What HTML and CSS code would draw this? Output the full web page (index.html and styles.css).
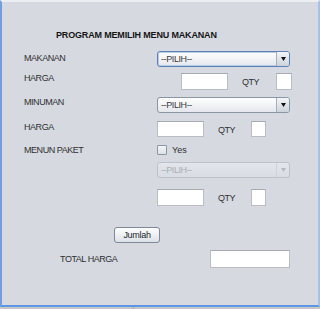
FILE: index.html
```html
<!DOCTYPE html>
<html lang="id">

<head>
  <meta charset="UTF-8">
  <meta name="viewport" content="width=device-width, initial-scale=1.0">
  <title>Program Memilih Menu Makanan</title>
  <link rel="stylesheet" href="styles.css">
</head>

<body>
  <div class="window">
    <div class="panel">
      <div class="row title-row">
        <h1 class="title">PROGRAM MEMILIH MENU MAKANAN</h1>
      </div>

      <div class="row row-makanan">
        <label class="label label-mid">MAKANAN</label>
        <div class="combo focused">
          <span class="combo-text">--PILIH--</span>
          <span class="combo-arrow"><svg width="5" height="4" viewBox="0 0 5 4"><path d="M0 0H5L2.5 4Z" fill="#111"/></svg></span>
        </div>
      </div>

      <div class="row row-harga1">
        <label class="label label-top">HARGA</label>
        <input class="field field-price shift" type="text">
        <span class="qty">QTY</span>
        <input class="field field-qty" type="text">
      </div>

      <div class="row row-minuman">
        <label class="label label-top">MINUMAN</label>
        <div class="combo">
          <span class="combo-text">--PILIH--</span>
          <span class="combo-arrow"><svg width="5" height="4" viewBox="0 0 5 4"><path d="M0 0H5L2.5 4Z" fill="#111"/></svg></span>
        </div>
      </div>

      <div class="row row-harga2">
        <label class="label label-top">HARGA</label>
        <input class="field field-price" type="text">
        <span class="qty">QTY</span>
        <input class="field field-qty small" type="text">
      </div>

      <div class="row row-paket">
        <label class="label label-mid">MENUN PAKET</label>
        <span class="check"></span>
        <span class="check-text">Yes</span>
      </div>

      <div class="row row-disabled">
        <div class="combo disabled">
          <span class="combo-text">--PILIH--</span>
          <span class="combo-arrow"><svg width="5" height="4" viewBox="0 0 5 4"><path d="M0 0H5L2.5 4Z" fill="#b4b9c0"/></svg></span>
        </div>
      </div>

      <div class="row row-harga3">
        <input class="field field-price" type="text">
        <span class="qty">QTY</span>
        <input class="field field-qty small" type="text">
      </div>

      <div class="row row-button">
        <button class="btn">Jumlah</button>
      </div>

      <div class="row row-total">
        <label class="label total-label">TOTAL HARGA</label>
        <input class="field field-total" type="text">
      </div>
    </div>
    <div class="status">
      <span class="status-left"></span>
    </div>
  </div>
</body>

</html>
```

FILE: styles.css
```css
/* global */
body {
  margin: 0;
  font-family: "Liberation Sans", Arial, sans-serif;
  background-color: #c9cacd;
}

/* window frame */
.window {
  width: 320px;
  height: 309px;
  overflow: hidden;
}

.panel {
  box-sizing: border-box;
  height: 307px;
  background-color: #d6d9df;
  border-top: 2px solid #eceef2;
  border-left: 2px solid #6d9ee6;
  border-right: 2px solid #a9bfe4;
  border-bottom: 2px solid #5f96e2;
  display: flex;
  flex-direction: column;
}

.status {
  height: 2px;
  background-color: #c6c7c9;
  display: flex;
}

.status-left {
  width: 133px;
  border-right: 1px solid #a9aaad;
}

/* rows */
.row {
  display: flex;
  flex-shrink: 0;
}

.title-row {
  margin-top: 27px;
  height: 12px;
}

.title {
  margin: 0 0 0 54px;
  font-size: 9px;
  line-height: 12px;
  font-weight: bold;
  letter-spacing: -0.17px;
  color: #151515;
}

.row-makanan {
  margin-top: 10px;
  height: 16px;
}

.row-harga1 {
  margin-top: 6px;
  height: 17px;
}

.row-minuman {
  margin-top: 7px;
  height: 16px;
}

.row-harga2 {
  margin-top: 8px;
  height: 16px;
}

.row-paket {
  margin-top: 8px;
  height: 10px;
}

.row-disabled {
  margin-top: 7px;
  height: 16px;
  padding-left: 155px;
}

.row-harga3 {
  margin-top: 11px;
  height: 17px;
  padding-left: 155px;
}

.row-button {
  margin-top: 21px;
  height: 16px;
  padding-left: 112px;
}

.row-total {
  margin-top: 7px;
  height: 18px;
  align-items: center;
}

/* labels */
.label {
  box-sizing: border-box;
  width: 155px;
  padding-left: 22px;
  font-size: 9px;
  letter-spacing: -0.45px;
  color: #2f3033;
  white-space: nowrap;
}

.label-mid {
  line-height: 15px;
}

.label-top {
  line-height: 10px;
}

.row-harga2 .label-top {
  line-height: 12px;
}

.row-paket .label-mid {
  line-height: 10px;
}

.total-label {
  width: 208px;
  padding-left: 58px;
  line-height: 14px;
}

.qty {
  align-self: center;
  margin: 1px 16px 0 14px;
  font-size: 9px;
  letter-spacing: -0.45px;
  color: #2f3033;
}

.row-harga1 .qty {
  margin-right: 17px;
}

/* text fields */
.field {
  box-sizing: border-box;
  margin: 0;
  padding: 0;
  height: 100%;
  background-color: #fff;
  border: 1px solid #b9bdc4;
  border-top-color: #a6abb3;
}

.field-price {
  width: 47px;
}

.field-price.shift {
  margin-left: 24px;
}

.field-qty {
  width: 16px;
}

.field-qty.small {
  width: 15px;
}

.field-total {
  width: 80px;
}

/* combo boxes */
.combo {
  box-sizing: border-box;
  width: 133px;
  height: 100%;
  display: flex;
  border: 1px solid #8a96a6;
  border-radius: 3px;
  background: linear-gradient(#ffffff, #e4e7ec);
}

.combo.focused {
  border-color: #5a82b6;
  box-shadow: inset 0 0 0 1px #b7cbe6;
}

.combo.disabled {
  border-color: #bcc2ca;
  background: linear-gradient(#e2e5ea, #d9dce2);
}

.combo-text {
  flex: 1;
  padding-left: 3px;
  font-size: 9px;
  line-height: 14px;
  letter-spacing: -0.4px;
  color: #3a3b3e;
}

.combo.disabled .combo-text {
  color: #a9aeb6;
}

.combo-arrow {
  width: 12px;
  display: flex;
  justify-content: center;
  align-items: center;
  border-left: 1px solid #a5afbb;
  background: linear-gradient(#f3f5f8, #cdd3db);
  border-radius: 0 2px 2px 0;
}

.combo.disabled .combo-arrow {
  border-left-color: #cdd2d8;
  background: transparent;
}

/* checkbox */
.check {
  box-sizing: border-box;
  width: 10px;
  height: 10px;
  border: 1px solid #8c96a3;
  border-radius: 1px;
  background: linear-gradient(#f4f5f7, #dde1e6);
}

.check-text {
  margin-left: 5px;
  font-size: 9px;
  line-height: 10px;
  color: #2f3033;
}

/* button */
.btn {
  box-sizing: border-box;
  width: 46px;
  height: 16px;
  padding: 0;
  font-family: "Liberation Sans", Arial, sans-serif;
  font-size: 9px;
  letter-spacing: -0.3px;
  color: #25282c;
  border: 1px solid #7e8897;
  border-radius: 3px;
  background: linear-gradient(#fdfdfe, #dde1e7);
}
```
